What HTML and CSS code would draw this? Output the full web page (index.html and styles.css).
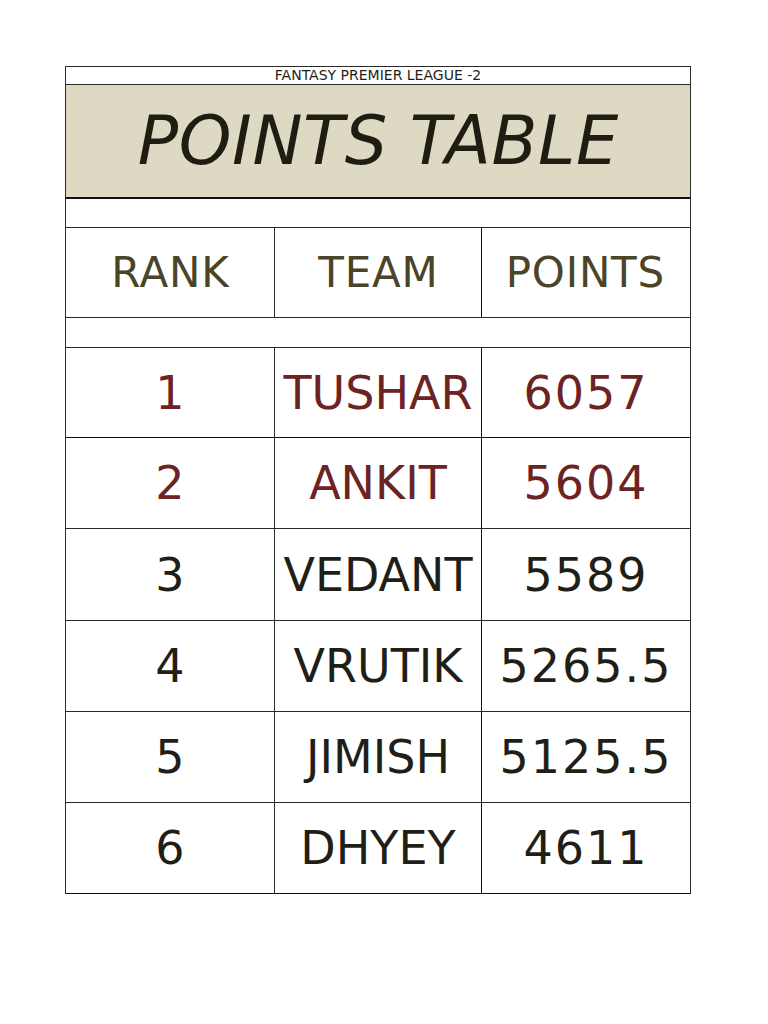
FILE: index.html
```html
<!DOCTYPE html>
<html>
<head>
<meta charset="utf-8">
<link rel="stylesheet" href="styles.css">
</head>
<body>
<div class="sheet">
  <div class="row caption">FANTASY PREMIER LEAGUE -2</div>
  <div class="row banner">POINTS TABLE</div>
  <div class="row spacer spacer-a"></div>
  <div class="row grid head">
    <div class="cell">RANK</div>
    <div class="cell">TEAM</div>
    <div class="cell">POINTS</div>
  </div>
  <div class="row spacer spacer-b"></div>
  <div class="row grid data top r1">
    <div class="cell">1</div>
    <div class="cell name">TUSHAR</div>
    <div class="cell num">6057</div>
  </div>
  <div class="row grid data top r2">
    <div class="cell">2</div>
    <div class="cell name">ANKIT</div>
    <div class="cell num">5604</div>
  </div>
  <div class="row grid data r3">
    <div class="cell">3</div>
    <div class="cell name">VEDANT</div>
    <div class="cell num">5589</div>
  </div>
  <div class="row grid data r4">
    <div class="cell">4</div>
    <div class="cell name">VRUTIK</div>
    <div class="cell num">5265.5</div>
  </div>
  <div class="row grid data r5">
    <div class="cell">5</div>
    <div class="cell name">JIMISH</div>
    <div class="cell num">5125.5</div>
  </div>
  <div class="row grid data r6">
    <div class="cell">6</div>
    <div class="cell name">DHYEY</div>
    <div class="cell num">4611</div>
  </div>
</div>
</body>
</html>
```
FILE: styles.css
```css
html, body {
  margin: 0;
  padding: 0;
  background: #ffffff;
}

body {
  font-family: "DejaVu Sans", "Liberation Sans", sans-serif;
  color: #1f1f17;
}

.sheet {
  width: 624px;
  margin: 66px 0 0 65px;
  border: 1px solid #2a2a2a;
  border-bottom-color: #111;
}

.row {
  border-bottom: 1px solid #2a2a2a;
  box-sizing: content-box;
}

.row:last-child {
  border-bottom: none;
}

.caption {
  height: 17px;
  font-size: 14px;
  line-height: 17px;
  text-align: center;
  color: #1f1f17;
}

.banner {
  height: 112px;
  background: #ddd9c3;
  border-bottom: 2px solid #111;
  display: flex;
  align-items: center;
  justify-content: center;
  font-style: italic;
  font-size: 67px;
  color: #1f1c12;
  letter-spacing: 0.6px;
  padding-left: 0.6px;
}

.spacer-a {
  height: 28px;
}

.spacer-b {
  height: 29px;
}

.grid {
  display: grid;
  grid-template-columns: 208px 207px 207px;
}

.cell {
  display: flex;
  align-items: center;
  justify-content: center;
  white-space: nowrap;
}

.cell + .cell {
  border-left: 1px solid #2a2a2a;
}

.grid .cell:nth-child(3) {
  border-left-color: #111;
}

.head {
  height: 89px;
  font-size: 42px;
  color: #4a4428;
  letter-spacing: 0.8px;
}

.head .cell {
  padding-left: 0.8px;
}

.data {
  font-size: 46px;
}

.data .num {
  letter-spacing: 2px;
  padding-left: 2px;
}

.top {
  color: #6c2323;
}

.r1 { height: 89px; border-bottom-color: #111; }
.r2 { height: 90px; }
.r3 { height: 91px; }
.r4 { height: 90px; }
.r5 { height: 90px; }
.r6 { height: 90px; }
```
